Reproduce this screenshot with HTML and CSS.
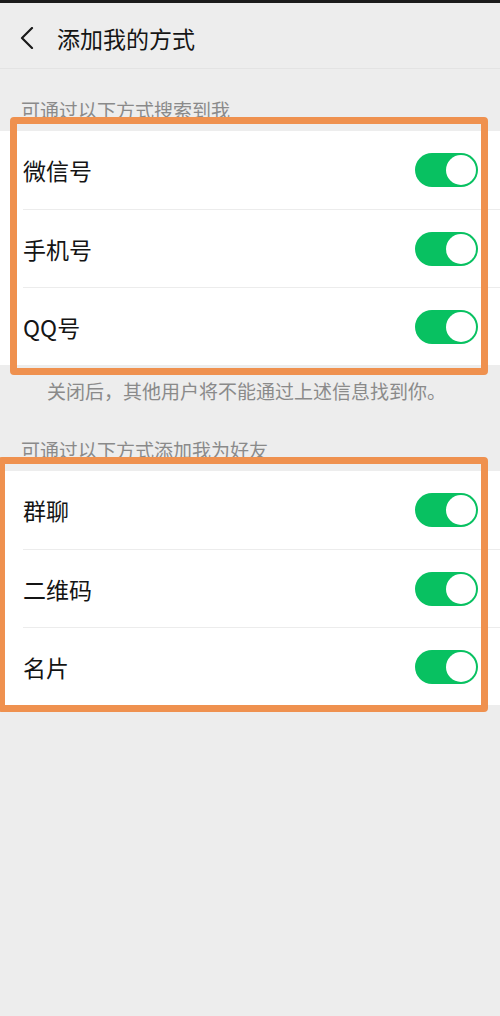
FILE: index.html
```html
<!DOCTYPE HTML>
<html lang="zh-CN">
  <head>
    <meta charset="utf-8" />
    <meta name="viewport" content="width=device-width, initial-scale=1.0" />
    <link rel="stylesheet" href="styles.css">
  </head>
  <body>
    <div class="statusbar"></div>
    <header>
      <svg class="back" width="14" height="22" viewBox="0 0 14 22">
        <polyline points="12,1 2,11 12,21" fill="none" stroke="#1a1a1a" stroke-width="2.2" stroke-linecap="round" stroke-linejoin="round" />
      </svg>
      <span class="titulo">添加我的方式</span>
    </header>

    <div class="rotulo rotulo-primeiro">可通过以下方式搜索到我</div>
    <div class="cartao">
      <div class="linha">
        <span class="nome">微信号</span>
        <span class="chave"><span class="bola"></span></span>
      </div>
      <div class="linha">
        <span class="nome">手机号</span>
        <span class="chave"><span class="bola"></span></span>
      </div>
      <div class="linha">
        <span class="nome">QQ号</span>
        <span class="chave"><span class="bola"></span></span>
      </div>
      <div class="marca marca-um"></div>
    </div>
    <div class="dica">关闭后，其他用户将不能通过上述信息找到你。</div>

    <div class="rotulo rotulo-segundo">可通过以下方式添加我为好友</div>
    <div class="cartao">
      <div class="linha">
        <span class="nome">群聊</span>
        <span class="chave"><span class="bola"></span></span>
      </div>
      <div class="linha">
        <span class="nome">二维码</span>
        <span class="chave"><span class="bola"></span></span>
      </div>
      <div class="linha">
        <span class="nome">名片</span>
        <span class="chave"><span class="bola"></span></span>
      </div>
      <div class="marca marca-dois"></div>
    </div>
  </body>
</html>
```

FILE: styles.css
```css
body {
  margin: 0;
  background-color: #ededed;
  font-family: "Noto Sans CJK SC", "Noto Sans", sans-serif;
  color: #111111;
  min-height: 1016px;
}

.statusbar {
  height: 3px;
  background-color: #1c1c1c;
}

header {
  display: flex;
  align-items: center;
  box-sizing: border-box;
  height: 66px;
  padding: 4px 0 0 20px;
  border-bottom: 1px solid #e3e3e3;
}
header .back {
  display: block;
  margin-right: 23px;
}
header .titulo {
  font-size: 23px;
  line-height: 26px;
  color: #151515;
}

.rotulo {
  padding-left: 21px;
  font-size: 19px;
  line-height: 19px;
  color: #8a8a8a;
  margin-bottom: 12px;
}
.rotulo-primeiro {
  margin-top: 31px;
}
.rotulo-segundo {
  margin-top: 36px;
}

.cartao {
  position: relative;
  background-color: #ffffff;
}
.linha {
  display: flex;
  align-items: center;
  justify-content: space-between;
  height: 78px;
  margin-left: 23px;
  padding-right: 22px;
  border-top: 1px solid #ececec;
  box-sizing: border-box;
}
.linha:first-child {
  border-top: none;
}
.linha .nome {
  font-size: 23px;
  line-height: 28px;
  color: #141414;
}

.chave {
  display: flex;
  justify-content: flex-end;
  align-items: center;
  box-sizing: border-box;
  width: 63px;
  height: 34px;
  padding: 2px;
  border-radius: 17px;
  background-color: #08c161;
}
.chave .bola {
  display: block;
  width: 30px;
  height: 30px;
  border-radius: 50%;
  background-color: #ffffff;
}

.dica {
  margin-top: 13px;
  padding-left: 47px;
  font-size: 19px;
  line-height: 26px;
  color: #8a8a8a;
}

/* moldura laranja de destaque */
.marca {
  position: absolute;
  border: 7px solid #ef914f;
  border-radius: 4px;
  pointer-events: none;
}
.marca-um {
  top: -14px;
  bottom: -10px;
  left: 10px;
  right: 12px;
}
.marca-dois {
  top: -14px;
  bottom: -7px;
  left: -2px;
  right: 12px;
}
```
